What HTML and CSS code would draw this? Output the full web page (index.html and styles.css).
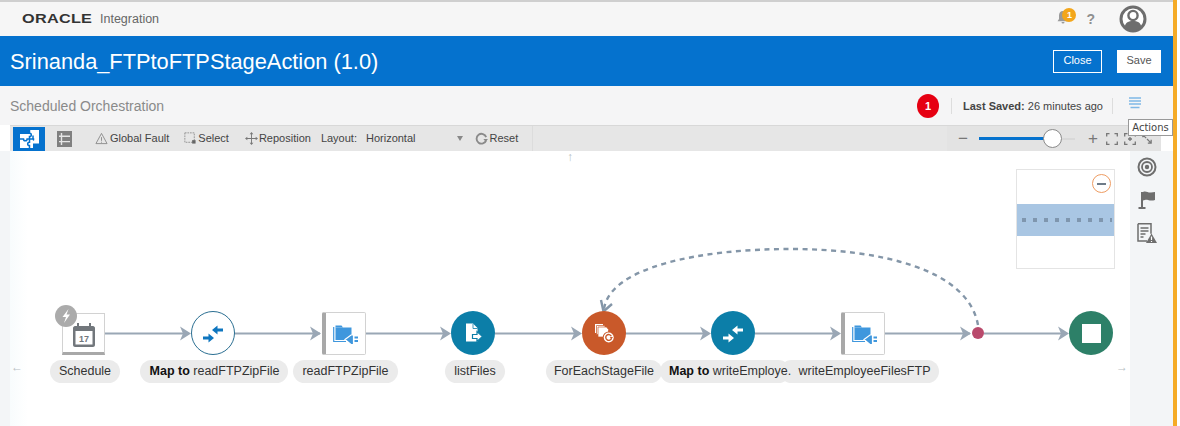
FILE: index.html
```html
<!DOCTYPE html>
<html lang="en">
<head>
<meta charset="utf-8">
<title>Srinanda_FTPtoFTPStageAction</title>
<link rel="stylesheet" href="styles.css">
</head>
<body>
<svg class="defs" width="0" height="0" aria-hidden="true">
  <symbol id="merge" viewBox="0 0 24 24">
    <path d="M11 9l5.500-4.500V7.500H22v3h-5.500v3z" fill="currentColor"/>
    <path d="M13 17l-5.500-4.500v3H2v3h5.500v3z" fill="currentColor"/>
  </symbol>
  <symbol id="ftp" viewBox="0 0 26 20">
    <path d="M.7 3v14.500H13" fill="none" stroke="#3f97dd" stroke-width="1.200"/>
    <path d="M2.500 3V1.500h6L10 3.500H2.500z" fill="#3f97dd"/>
    <rect x="2.500" y="3.500" width="16" height="12.500" fill="#3f97dd"/>
    <path d="M12 15.500l6-4.500h2.500v9.500H18z" fill="#3f97dd" stroke="#fff" stroke-width="1.200"/>
    <rect x="21.500" y="12.500" width="3.500" height="2" fill="#3f97dd"/>
    <rect x="21.500" y="16" width="3.500" height="2" fill="#3f97dd"/>
  </symbol>
</svg>
<div class="shell">
  <div class="app">
    <header class="topbar">
      <div class="brand">
        <span class="logo">ORACLE</span><span class="product">Integration</span>
      </div>
      <div class="top-actions">
        <span class="bell">
          <svg class="bell-icon" viewBox="0 0 14 14"><path d="M7 1c2.600 0 4 2 4 4.500V9l1.500 2.200h-11L3 9V5.500C3 3 4.400 1 7 1zM5.500 12h3a1.500 1.500 0 0 1-3 0z" fill="#9a9a9a"/></svg>
          <span class="bell-count">1</span>
        </span>
        <span class="help">?</span>
        <svg class="avatar" viewBox="0 0 28 28">
          <circle cx="14" cy="14" r="12" fill="#fff" stroke="#6e6e6e" stroke-width="3"/>
          <circle cx="14" cy="10.500" r="4.600" fill="none" stroke="#6e6e6e" stroke-width="2.400"/>
          <path d="M5.500 22c1-4.500 4-6 8.500-6s7.500 1.500 8.500 6a12 12 0 0 1-17 0z" fill="#6e6e6e"/>
        </svg>
      </div>
    </header>

    <section class="titlebar">
      <h1 class="title">Srinanda_FTPtoFTPStageAction (1.0)</h1>
      <div class="title-buttons">
        <button class="btn btn-outline">Close</button>
        <button class="btn btn-solid">Save</button>
      </div>
    </section>

    <section class="subbar">
      <span class="kind">Scheduled Orchestration</span>
      <div class="status">
        <span class="error-count">1</span>
        <span class="status-sep"></span>
        <span class="saved"><b>Last Saved:</b> 26 minutes ago</span>
        <span class="status-sep status-sep-b"></span>
        <svg class="actions-icon" viewBox="0 0 14 12"><path d="M1 1h12M1 4h12M1 7h12M2.500 10.500h9" stroke="#7fb8e6" stroke-width="1.500" fill="none"/></svg>
      </div>
      <span class="tooltip">Actions</span>
    </section>

    <nav class="toolbar">
      <span class="view-btn">
        <svg class="puzzle" viewBox="0 0 21 20"><path d="M8 5h3V1h9v13.500h-6V19H1V5z" fill="#fff"/><path d="M10.500 1v3.200c2.400 0 2.400 3.400 0 3.400V10M1 10h3.500c0 2.400 3.600 2.400 3.600 0h6.400c0 2.400 0 0 0 0M14 10V6.500M10.500 10v3.200c-2.400 0-2.400 3.400 0 3.400V19" fill="none" stroke="#0572ce" stroke-width="1.500"/></svg>
      </span>
      <svg class="list-icon" viewBox="0 0 15 16"><path d="M0 0h15v16H0z" fill="#808080"/><path d="M4.500 2v12M2 5.300h11M2 10.600h11" stroke="#e5e5e5" stroke-width="1.400"/></svg>
      <span class="tool tool-fault">
        <svg class="tool-icon" viewBox="0 0 14 14"><path d="M7 1.500L13 12.500H1z" fill="none" stroke="#8a8a8a"/><path d="M7 5.500v4M7 10.500v1" stroke="#8a8a8a"/></svg>Global Fault
      </span>
      <span class="tool tool-select">
        <svg class="tool-icon tool-icon-s" viewBox="0 0 14 14"><path d="M1 1h11v11H1z" fill="none" stroke="#8a8a8a" stroke-dasharray="2 1"/><rect x="9.500" y="9.500" width="4" height="4" fill="#666"/></svg>Select
      </span>
      <span class="tool tool-move">
        <svg class="tool-icon tool-icon-m" viewBox="0 0 14 14"><path d="M7 0l2 2.500H5zM7 14l-2-2.500h4zM0 7l2.500-2v4zM14 7l-2.500 2V5zM6.500 2h1v10h-1zM2 6.500h10v1H2z" fill="#777"/></svg>Reposition
      </span>
      <span class="tool tool-layout">Layout:</span>
      <span class="tool tool-horizontal">Horizontal</span>
      <span class="caret"></span>
      <span class="tool tool-reset">
        <svg class="tool-icon" viewBox="0 0 14 14"><path d="M12 5.500A5.300 5.300 0 1 0 12 9" fill="none" stroke="#8a8a8a" stroke-width="2"/><path d="M9 7.500h5l-2.500 3z" fill="#8a8a8a"/></svg>Reset
      </span>
      <span class="tool-sep"></span>
      <div class="zoom">
        <span class="zoom-minus">−</span>
        <span class="slider"><span class="slider-fill"></span><span class="slider-knob"></span></span>
        <span class="zoom-plus">+</span>
        <svg class="zoom-icon" viewBox="0 0 12 12"><path d="M.7 3.500V.7h2.800M8.500.7h2.800v2.800M11.300 8.500v2.800H8.500M3.500 11.300H.7V8.500" fill="none" stroke="#777" stroke-width="1.300"/></svg>
        <svg class="zoom-icon" viewBox="0 0 12 12"><path d="M.7 3.500V.7h2.800M8.500.7h2.800v2.800M11.300 8.500v2.800H8.500M3.500 11.300H.7V8.500M4 6h4M6 4v4" fill="none" stroke="#777" stroke-width="1.300"/></svg>
        <svg class="zoom-icon zoom-icon-last" viewBox="0 0 12 12"><path d="M1 1l4 4M1 4V1h3M11 11L6 6M11 7v4H7" fill="none" stroke="#777" stroke-width="1.500"/></svg>
      </div>
    </nav>

    <main class="work">
      <div class="gutter"></div>
      <div class="canvas">
        <span class="pan pan-up">↑</span>
        <span class="pan pan-left">←</span>
        <span class="pan pan-right">→</span>

        <svg class="edges" viewBox="0 0 1120 275">
          <g class="edge">
            <path d="M94 182.500h85M225 182.500h85M356 182.500h83M485 182.500h85M615 182.500h84M745 182.500h84M875 182.500h85M974 182.500h83"/>
          </g>
          <g class="head">
            <path d="M170 175.500l11 7-11 7 3-7zM300 175.500l11 7-11 7 3-7zM430 175.500l11 7-11 7 3-7zM561 175.500l11 7-11 7 3-7zM690 175.500l11 7-11 7 3-7zM820 175.500l11 7-11 7 3-7zM950 175.500l11 7-11 7 3-7zM1048 175.500l11 7-11 7 3-7z"/>
          </g>
          <path class="loop" d="M968 174C958 118 870 98 780 98C690 98 600 116 594 158"/>
          <path class="loop-head" d="M591 149l2.500 11.500 8.500-7.500"/>
        </svg>

        <div class="trigger node-schedule">
          <svg class="cal" viewBox="0 0 22 24"><path d="M2 3h18c1 0 2 1 2 2v17c0 1-1 2-2 2H2c-1 0-2-1-2-2V5c0-1 1-2 2-2z" fill="#72777c"/><rect x="2.500" y="8" width="17" height="13.500" fill="#fff"/><rect x="4" y="0" width="2" height="5" fill="#72777c"/><rect x="16" y="0" width="2" height="5" fill="#72777c"/><text x="11" y="19" class="cal-day">17</text></svg>
        </div>
        <span class="badge-bolt">
          <svg viewBox="0 0 22 22"><path d="M13.500 4L7.500 12h3.500l-2 6 6-8.500h-3.500z" fill="#fff"/></svg>
        </span>

        <span class="circle circle-outline node-map1"><svg class="merge"><use href="#merge"/></svg></span>
        <div class="adapter node-read"><svg class="ftp"><use href="#ftp"/></svg></div>
        <span class="circle circle-blue node-list">
          <svg class="file-icon" viewBox="0 0 18 20"><path d="M1 .5h7l4.500 4.500v13.500H1z" fill="#fff"/><path d="M8 1v4.500h4.500" fill="none" stroke="#0c7ea8" stroke-width=".8"/><path d="M7.500 11.500h4.500V8.500l5.500 5-5.500 5v-3H7.500z" fill="#fff" stroke="#0c7ea8" stroke-width="1.200"/></svg>
        </span>
        <span class="circle circle-orange node-each">
          <svg class="loop-icon" viewBox="0 0 20 20">
            <path d="M1 1h8v9H1z" fill="#fff"/>
            <path d="M2.500 2.500h8.500v9H2.500z" fill="#fff" stroke="#c9592a" stroke-width=".7"/>
            <path d="M4 4h8.500l2 2.500V14H4z" fill="#fff" stroke="#c9592a" stroke-width=".7"/>
            <circle cx="14.700" cy="14.500" r="6" fill="#c9592a"/>
            <circle cx="14.700" cy="14.500" r="5" fill="#fff"/>
            <path d="M17.300 13.200a2.900 2.900 0 1 0 .2 2" fill="none" stroke="#c9592a" stroke-width="1.400"/>
            <path d="M15.800 14h3.200l-1.500 2z" fill="#c9592a"/>
          </svg>
        </span>
        <span class="circle circle-blue node-map2"><svg class="merge merge-white"><use href="#merge"/></svg></span>
        <div class="adapter node-write"><svg class="ftp"><use href="#ftp"/></svg></div>
        <span class="merge-dot"></span>
        <span class="circle circle-green node-end"><span class="stop"></span></span>

        <span class="pill pill-schedule">Schedule</span>
        <span class="pill pill-map1"><b>Map to</b> readFTPZipFile</span>
        <span class="pill pill-read">readFTPZipFile</span>
        <span class="pill pill-list">listFiles</span>
        <span class="pill pill-each">ForEachStageFile</span>
        <span class="pill pill-write">writeEmployeeFilesFTP</span>
        <span class="pill pill-map2"><b>Map to</b> writeEmploye.</span>

        <div class="minimap">
          <span class="mini-band"><span class="mini-dots"></span></span>
          <span class="mini-toggle"></span>
        </div>
      </div>
      <aside class="rail">
        <svg class="rail-icon" viewBox="0 0 20 20"><circle cx="10" cy="10" r="8.500" fill="none" stroke="#6e6e6e" stroke-width="2"/><circle cx="10" cy="10" r="5" fill="none" stroke="#6e6e6e" stroke-width="1.800"/><circle cx="10" cy="10" r="2.200" fill="#6e6e6e"/></svg>
        <svg class="rail-icon" viewBox="0 0 20 20"><path d="M4 2h2v15H4zM1.500 17h7v2h-7z" fill="#6e6e6e"/><path d="M6 2c3-1.500 5 1 8 .5l4-.5v8c-3 1-5 .5-7 0-2-.400-3 0-5 .5z" fill="#6e6e6e"/></svg>
        <svg class="rail-icon" viewBox="0 0 20 20"><path d="M1 .8h13v10M10 18H1V.8" fill="none" stroke="#6e6e6e" stroke-width="1.500"/><path d="M3.500 5h8M3.500 8h8M3.500 11h5M3.500 14h3" stroke="#6e6e6e" stroke-width="1.300"/><path d="M14.500 10.500l5.500 9.500H9z" fill="#6e6e6e"/><path d="M14.500 13.500v3.500M14.500 18v1" stroke="#fff" stroke-width="1.200"/></svg>
      </aside>
    </main>
  </div>
  <div class="stripe"></div>
</div>
</body>
</html>
```
FILE: styles.css
```css
* { box-sizing: border-box; }
html, body { margin: 0; padding: 0; }
body {
  width: 1180px;
  height: 426px;
  overflow: hidden;
  background: #fff;
  font-family: "Liberation Sans", Arial, sans-serif;
  color: #333;
}
.defs { position: absolute; }
.shell { display: flex; height: 426px; width: 1180px; }
.app { width: 1173px; display: flex; flex-direction: column; position: relative; }
.stripe { width: 4px; background: #f5ab27; }

/* top bar */
.topbar {
  height: 36px;
  border-top: 2px solid #cfcfcf;
  background: #f6f6f6;
  display: flex;
  align-items: center;
  justify-content: space-between;
  padding: 0 26px 0 22px;
}
.brand { display: flex; align-items: center; }
.logo {
  display: inline-block;
  width: 71px;
  font-size: 12.500px;
  font-weight: bold;
  letter-spacing: .2px;
  color: #333;
  transform: scaleX(1.300);
  transform-origin: left center;
}
.product { margin-left: 7px; font-size: 12.500px; color: #666; }
.top-actions { display: flex; align-items: center; }
.bell { position: relative; width: 14px; height: 14px; display: block; margin-bottom: 4px; }
.bell-icon { width: 14px; height: 14px; display: block; }
.bell-count {
  position: absolute;
  left: 6px;
  top: -2px;
  width: 14px;
  height: 14px;
  border-radius: 50%;
  background: #f3a61b;
  color: #fff;
  font-size: 9px;
  font-weight: bold;
  line-height: 14px;
  text-align: center;
}
.help { margin-left: 16px; font-size: 14px; font-weight: bold; color: #8f8f8f; }
.avatar { width: 28px; height: 28px; margin-left: 24px; display: block; }

/* title */
.titlebar {
  height: 50px;
  background: #0572ce;
  display: flex;
  align-items: center;
  justify-content: space-between;
  padding: 0 12px 0 10px;
}
.title { margin: 2px 0 0; font-size: 21.800px; font-weight: normal; color: #fff; }
.title-buttons { display: flex; gap: 15px; align-items: center; }
.btn {
  height: 23px;
  padding: 0 0 2px;
  font: 11px "Liberation Sans", Arial, sans-serif;
  border: 1px solid #fff;
}
.btn-outline { width: 49px; background: transparent; color: #fff; }
.btn-solid { width: 44px; background: #fff; color: #555; }

/* sub bar */
.subbar {
  height: 39px;
  background: #f5f5f6;
  display: flex;
  align-items: center;
  justify-content: space-between;
  padding: 0 31px 0 10px;
}
.kind { font-size: 14px; color: #8a8a8a; }
.status { display: flex; align-items: center; }
.error-count {
  width: 22px;
  height: 24px;
  border-radius: 50%;
  background: #e60012;
  color: #fff;
  font-size: 11px;
  font-weight: bold;
  line-height: 24px;
  text-align: center;
}
.status-sep { width: 1px; height: 16px; background: #ddd; margin: 0 11px 0 12px; }
.status-sep-b { margin: 0 15px 0 9px; }
.saved { font-size: 11px; color: #444; white-space: nowrap; }
.actions-icon { width: 14px; height: 12px; display: block; margin-bottom: 6px; }
.tooltip {
  position: absolute;
  right: 0;
  top: 119px;
  width: 45px;
  height: 17px;
  background: #fff;
  border: 1px solid #999;
  font: 10px/15px "DejaVu Sans", sans-serif;
  text-align: center;
  color: #444;
  z-index: 3;
}

/* toolbar */
.toolbar {
  height: 26px;
  width: 1151px;
  margin-left: 10px;
  background: #e6e6e6;
  border-top: 1px solid #d8d8d8;
  display: flex;
  align-items: center;
  padding-left: 3px;
  font-size: 11px;
  color: #444;
}
.view-btn {
  width: 32px;
  height: 24px;
  background: #0572ce;
  display: flex;
  align-items: center;
  justify-content: center;
}
.puzzle { width: 21px; height: 20px; display: block; }
.list-icon { width: 15px; height: 16px; margin-left: 12px; display: block; }
.tool { display: flex; align-items: center; white-space: nowrap; margin-bottom: 1px; }
.tool-icon { width: 13px; height: 13px; margin-right: 2px; display: block; flex: none; }
.tool-icon-s { width: 12px; height: 12px; }
.tool-icon-m { margin-right: 1px; }
.tool-fault { margin-left: 23px; }
.tool-select { margin-left: 15px; }
.tool-move { margin-left: 16px; }
.tool-layout { margin-left: 10px; }
.tool-horizontal { margin-left: 9px; }
.caret {
  margin-left: 41.500px;
  width: 0;
  height: 0;
  border-left: 3.500px solid transparent;
  border-right: 3.500px solid transparent;
  border-top: 5px solid #888;
}
.tool-reset { margin-left: 11.500px; }
.tool-sep { margin-left: 14px; width: 1px; height: 25px; background: #dcdcdc; }
.zoom { margin-left: auto; width: 214px; height: 25px; background: #e3e3e3; display: flex; align-items: center; padding-left: 11px; }
.zoom-minus { font-size: 17px; color: #777; width: 21px; }
.slider { position: relative; width: 96px; height: 2px; background: #d8d8d8; }
.slider-fill { position: absolute; left: 0; top: -.5px; width: 73px; height: 3px; background: #0572ce; }
.slider-knob {
  position: absolute;
  left: 64px;
  top: -9px;
  width: 19px;
  height: 19px;
  border-radius: 50%;
  background: #fff;
  border: 1px solid #8a8a8a;
}
.zoom-plus { font-size: 17px; color: #777; margin-left: 13px; width: 12px; }
.zoom-icon { width: 12px; height: 12px; margin-left: 6px; display: block; flex: none; }
.zoom-icon-last { margin-left: 6px; width: 10px; height: 10px; }

/* work area */
.work { flex: 1; display: flex; min-height: 0; }
.gutter { width: 10px; background: #f3f5f7; }
.canvas {
  flex: 1;
  position: relative;
  background: linear-gradient(90deg, #f8fcfd 0, #fff 18px);
  overflow: hidden;
}
.rail {
  width: 43px;
  background: #f3f5f7;
  display: flex;
  flex-direction: column;
  align-items: center;
  gap: 13px;
  padding: 6px 9px 0 0;
}
.rail-icon { width: 20px; height: 20px; display: block; }

.pan { position: absolute; font-size: 12px; color: #b9bfc5; line-height: 12px; }
.pan-up { left: 557px; top: 0; }
.pan-left { left: 1px; top: 210px; }
.pan-right { left: 1106px; top: 210px; }

.edges { position: absolute; left: 0; top: 0; width: 1120px; height: 275px; }
.edge path { stroke: #9aa7b5; stroke-width: 2.200px; fill: none; }
.head path { fill: #9aa7b5; }
.loop { fill: none; stroke: #8496a8; stroke-width: 2.400px; stroke-dasharray: 5 4.500; }
.loop-head { fill: none; stroke: #8496a8; stroke-width: 2.400px; }

.trigger {
  position: absolute;
  width: 43px;
  height: 42px;
  background: #fff;
  border: 1px solid #d2d2d2;
  border-bottom: 3px solid #a8a8a8;
  display: flex;
  align-items: center;
  justify-content: center;
}
.node-schedule { left: 52px; top: 162px; }
.cal { width: 22px; height: 24px; margin: 3px 0 0 1px; display: block; }
.cal-day { font: bold 9px "Liberation Sans", sans-serif; fill: #72777c; text-anchor: middle; }
.badge-bolt {
  position: absolute;
  left: 45px;
  top: 154px;
  width: 22px;
  height: 22px;
  border-radius: 50%;
  background: #ababab;
}
.badge-bolt svg { display: block; width: 22px; height: 22px; }

.circle {
  position: absolute;
  top: 160px;
  width: 44px;
  height: 44px;
  border-radius: 50%;
  display: flex;
  align-items: center;
  justify-content: center;
}
.circle-outline { background: #fff; border: 1.500px solid #2b6f92; color: #0f76bf; }
.circle-blue { background: #0c7ea8; color: #fff; }
.circle-orange { background: #c9592a; }
.circle-green { background: #2d8068; }
.node-map1 { left: 181px; }
.node-list { left: 441px; }
.node-each { left: 572px; }
.node-map2 { left: 701px; }
.node-end { left: 1059px; }
.merge { width: 24px; height: 24px; display: block; }
.file-icon { width: 18px; height: 20px; display: block; margin-left: 2px; }
.loop-icon { width: 20px; height: 20px; display: block; }
.stop { display: block; width: 19px; height: 19px; background: #fff; }

.adapter {
  position: absolute;
  top: 161px;
  width: 44px;
  height: 43px;
  background: #fff;
  border: 1px solid #d2d2d2;
  border-left: 4px solid #a8a8a8;
  border-radius: 2px;
  display: flex;
  align-items: center;
  justify-content: center;
}
.node-read { left: 312px; }
.node-write { left: 831px; }
.ftp { width: 26px; height: 20px; display: block; }

.merge-dot {
  position: absolute;
  left: 962px;
  top: 176px;
  width: 12px;
  height: 12px;
  border-radius: 50%;
  background: #b94a6c;
}

.pill {
  position: absolute;
  top: 209px;
  height: 23px;
  border-radius: 12px;
  background: #ebebeb;
  font-size: 12.500px;
  line-height: 23px;
  text-align: center;
  white-space: nowrap;
  color: #333;
}
.pill b { color: #111; }
.pill-schedule { left: 40px; width: 70px; }
.pill-map1 { left: 130px; width: 148px; padding-left: 1px; }
.pill-read { left: 283px; width: 105px; }
.pill-list { left: 435px; width: 60px; }
.pill-each { left: 536px; width: 116px; }
.pill-map2 { left: 650px; width: 130px; padding-left: 9px; }
.pill-write { left: 770px; width: 159px; padding-left: 10px; }

.minimap {
  position: absolute;
  left: 1006px;
  top: 18px;
  width: 99px;
  height: 100px;
  background: #fff;
  border: 1px solid #e4e4e4;
}
.mini-band {
  position: absolute;
  left: 0;
  top: 34px;
  width: 97px;
  height: 32px;
  background: #a9c6e3;
  display: flex;
  align-items: center;
  padding-left: 5px;
}
.mini-dots {
  display: block;
  width: 90px;
  height: 4px;
  background: repeating-linear-gradient(90deg, #7f96ae 0 4px, transparent 4px 11px);
}
.mini-toggle {
  position: absolute;
  left: 75px;
  top: 4px;
  width: 19px;
  height: 19px;
  border-radius: 50%;
  border: 1px solid #ee9c62;
  background: linear-gradient(#6e7b88, #6e7b88) center / 9px 2px no-repeat;
}
```
